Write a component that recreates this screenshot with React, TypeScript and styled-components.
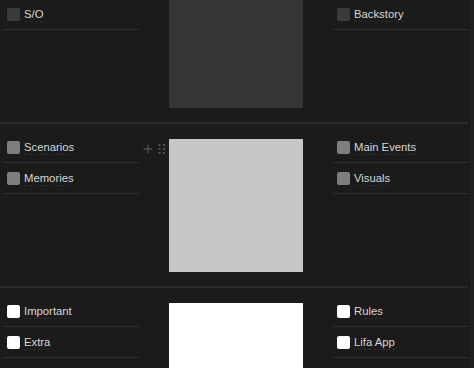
import React from "react";
import styled, { createGlobalStyle } from "styled-components";

const Global = createGlobalStyle`
  html, body { margin: 0; padding: 0; background: #1b1b1b; overflow: hidden; }
  body { font-family: "Liberation Sans", Arial, sans-serif; }
`;

const Page = styled.div`
  width: 474px;
  height: 368px;
  overflow: hidden;
  background: #1b1b1b;
  box-sizing: border-box;
  border-right: 4px solid #202020;
`;

const Scroller = styled.div`
  margin-top: -42px;
`;

const Section = styled.section`
  border-top: 2px solid #2a2a2a;
  width: 468px;
  padding: 15px 0 14px 3px;
  box-sizing: border-box;
  display: grid;
  grid-template-columns: 136px 134px 136px;
  column-gap: 30px;
  align-items: start;
  position: relative;
`;

const List = styled.div<{ $offset?: boolean }>`
  display: flex;
  flex-direction: column;
  gap: 7px;
  padding-top: ${(p) => (p.$offset ? "31px" : "0")};
`;

const Row = styled.div`
  display: flex;
  align-items: center;
  gap: 4px;
  padding: 2px 0 8px 4px;
  height: 13px;
  box-sizing: content-box;
  border-bottom: 1px solid #2d2d2d;
`;

const Check = styled.span<{ $c: string }>`
  width: 13px;
  height: 13px;
  border-radius: 2px;
  background: ${(p) => p.$c};
  flex: none;
`;

const Label = styled.span`
  font-size: 11.3px;
  line-height: 12px;
  padding-bottom: 1px;
  color: #d6d6d6;
  border-bottom: 1px dashed rgba(255, 255, 255, 0.07);
  white-space: nowrap;
`;

const Swatch = styled.div<{ $c: string }>`
  width: 134px;
  height: 133px;
  background: ${(p) => p.$c};
`;

const Controls = styled.div`
  position: absolute;
  left: 143px;
  top: 20px;
  display: flex;
  align-items: center;
  gap: 5px;
`;

type Sec = { swatch: string; check: string; left: string[]; right: string[]; controls?: boolean; offset?: boolean };

const sections: Sec[] = [
  { swatch: "#353535", check: "#3b3b3b", left: ["S/O"], right: ["Backstory"], offset: true },
  { swatch: "#c6c6c6", check: "#7e7e7e", left: ["Scenarios", "Memories"], right: ["Main Events", "Visuals"], controls: true },
  { swatch: "#ffffff", check: "#ffffff", left: ["Important", "Extra"], right: ["Rules", "Lifa App"] },
];

const Plus = () => (
  <svg width="10" height="10" viewBox="0 0 10 10">
    <path d="M5 0.5V9.5M0.5 5H9.5" stroke="#4e4e4e" strokeWidth="1.3" />
  </svg>
);

const Grip = () => (
  <svg width="8" height="10" viewBox="0 0 8 10">
    {[1, 5, 9].map((y) =>
      [1.5, 6].map((x) => <rect key={`${x}-${y}`} x={x - 1} y={y - 1} width="2" height="2" fill="#4e4e4e" />)
    )}
  </svg>
);

export default function App() {
  return (
    <Page>
      <Global />
      <Scroller>
        {sections.map((s, i) => (
          <Section key={i}>
            <List $offset={s.offset}>
              {s.left.map((t) => (
                <Row key={t}>
                  <Check $c={s.check} />
                  <Label>{t}</Label>
                </Row>
              ))}
            </List>
            <Swatch $c={s.swatch} />
            <List $offset={s.offset}>
              {s.right.map((t) => (
                <Row key={t}>
                  <Check $c={s.check} />
                  <Label>{t}</Label>
                </Row>
              ))}
            </List>
            {s.controls && (
              <Controls>
                <Plus />
                <Grip />
              </Controls>
            )}
          </Section>
        ))}
      </Scroller>
    </Page>
  );
}
